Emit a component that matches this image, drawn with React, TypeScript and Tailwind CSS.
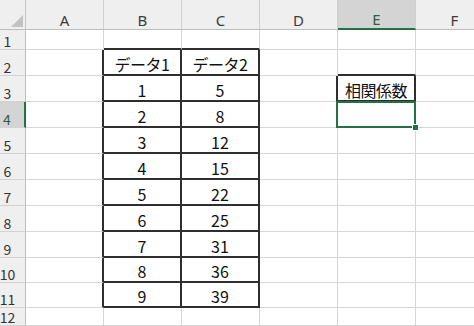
const COLS = ["", "A", "B", "C", "D", "E", "F"];
const ROWS = 12;

const cellText: Record<string, string> = {
  "2-2": "データ1",
  "2-3": "データ2",
  "3-5": "相関係数",
};
const d1 = [1, 2, 3, 4, 5, 6, 7, 8, 9];
const d2 = [5, 8, 12, 15, 22, 25, 31, 36, 39];
d1.forEach((v, i) => {
  cellText[`${i + 3}-2`] = String(v);
  cellText[`${i + 3}-3`] = String(d2[i]);
});

// bordered range: B2:C11 plus E3
function bordered(r: number, c: number) {
  if (r >= 2 && r <= 11 && c >= 2 && c <= 3) return true;
  return r === 3 && c === 5;
}

const SEL_ROW = 4;
const SEL_COL = 5;

function Corner() {
  return (
    <div className="bg-[#efefef] border-r border-r-[#c6c6c6] border-b border-b-[#bdbdbd]">
      <svg width="26" height="30" viewBox="0 0 26 30">
        <polygon points="23,15 23,27 11,27" fill="#c2c2c2" />
      </svg>
    </div>
  );
}

function ColHeader({ label, selected }: { label: string; selected: boolean }) {
  return (
    <div
      className={
        "flex items-end justify-center pb-[1px] text-[15px] leading-[16px] border-r border-r-[#cfcfcf] " +
        (selected
          ? "bg-[#d4d4d4] text-[#2f5c44] border-b-2 border-b-[#217346]"
          : "bg-[#efefef] text-[#3c3c3c] border-b border-b-[#bdbdbd]")
      }
      style={{ fontFamily: '"Noto Sans", "Liberation Sans", sans-serif' }}
    >
      {label}
    </div>
  );
}

function RowHeader({ n, selected }: { n: number; selected: boolean }) {
  return (
    <div
      className={
        "flex items-end justify-center overflow-hidden pr-[10px] pb-[1px] text-[14px] leading-[14px] border-b border-b-[#d2d2d2] " +
        (selected
          ? "bg-[#d4d4d4] text-[#2f5c44] border-r-2 border-r-[#217346]"
          : "bg-[#efefef] text-[#333] border-r border-r-[#bdbdbd]")
      }
      style={{ fontFamily: '"Noto Sans CJK JP", sans-serif' }}
    >
      {n}
    </div>
  );
}

function Cell({ r, c }: { r: number; c: number }) {
  const darkRight = bordered(r, c) || bordered(r, c + 1);
  const darkBottom = bordered(r, c) || bordered(r + 1, c);
  const active = r === SEL_ROW && c === SEL_COL;
  const text = cellText[`${r}-${c}`];
  return (
    <div
      className={
        "relative flex items-end justify-center pb-[2px] text-[16px] leading-[16px] text-[#111] whitespace-nowrap " +
        (darkRight ? "border-r-2 border-r-[#2e2e2e] " : "border-r border-r-[#d6d6d6] ") +
        (darkBottom ? "border-b-2 border-b-[#2e2e2e]" : "border-b border-b-[#d6d6d6]")
      }
      style={{ fontFamily: '"Noto Sans CJK JP", sans-serif' }}
    >
      {text && <span className={text.length > 3 ? "tracking-[-0.5px]" : ""}>{text}</span>}
      {active && (
        <>
          <div className="absolute -left-[2px] -top-[1px] -right-[1px] -bottom-[1px] border-2 border-[#217346]" />
          <div className="absolute -right-[4px] -bottom-[4px] z-10 w-[7px] h-[7px] bg-[#217346] border border-white" />
        </>
      )}
    </div>
  );
}

export default function App() {
  const rows = Array.from({ length: ROWS + 1 }, (_, r) => r);
  return (
    <div className="w-[474px] h-[326px] overflow-hidden bg-white">
      <div className="grid grid-cols-[26px_78px_78px_78px_78px_78px_78px] grid-rows-[30px_20px_26px_26px_26px_26px_26px_26px_26px_26px_25px_25px_18px] w-[494px]">
        {rows.map((r) =>
          COLS.map((label, c) => {
            const key = `${r}-${c}`;
            if (r === 0 && c === 0) return <Corner key={key} />;
            if (r === 0) return <ColHeader key={key} label={label} selected={c === SEL_COL} />;
            if (c === 0) return <RowHeader key={key} n={r} selected={r === SEL_ROW} />;
            return <Cell key={key} r={r} c={c} />;
          })
        )}
      </div>
    </div>
  );
}
